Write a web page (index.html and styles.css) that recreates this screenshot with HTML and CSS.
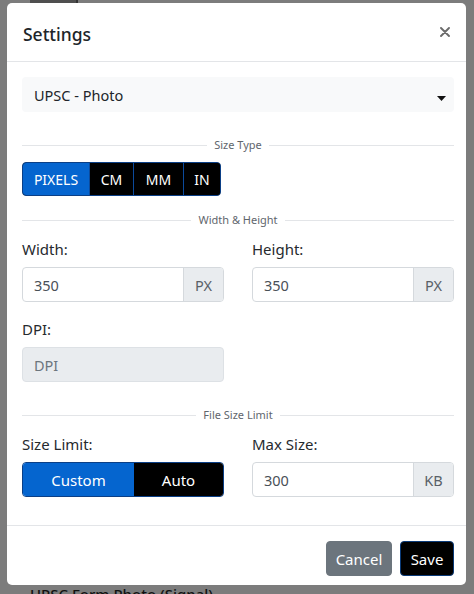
FILE: index.html
```html
<!DOCTYPE html>
<html>
<head>
<meta charset="utf-8">
<link rel="stylesheet" href="styles.css">
</head>
<body>
<div class="page">
  <div class="bg-top"><span class="bg-block"></span><span class="bg-rest"></span></div>
  <div class="bg-text">UPSC Form Photo (Signal)</div>

  <div class="modal">
    <div class="modal-header">
      <h5 class="modal-title">Settings</h5>
      <button class="close" aria-label="Close">
        <svg width="10" height="10" viewBox="0 0 10 10"><path d="M1 1L9 9M9 1L1 9" stroke="#6b6b6b" stroke-width="1.9" stroke-linecap="round"/></svg>
      </button>
    </div>
    <div class="modal-body">
      <div class="select-box">
        <span>UPSC - Photo</span>
        <svg class="caret" width="9" height="5" viewBox="0 0 9 5"><path d="M0 0H9L4.5 5Z" fill="#111"/></svg>
      </div>

      <div class="divider d-size"><span>Size Type</span></div>
      <div class="seg-group">
        <span class="seg active seg-px">PIXELS</span>
        <span class="seg seg-cm">CM</span>
        <span class="seg seg-mm">MM</span>
        <span class="seg seg-in">IN</span>
      </div>

      <div class="divider d-wh"><span>Width &amp; Height</span></div>
      <div class="form-grid">
        <div class="field">
          <label class="lbl">Width:</label>
          <div class="input-group"><span class="val">350</span><span class="addon">PX</span></div>
        </div>
        <div class="field">
          <label class="lbl">Height:</label>
          <div class="input-group"><span class="val">350</span><span class="addon">PX</span></div>
        </div>
        <div class="field f-dpi">
          <label class="lbl">DPI:</label>
          <div class="input-disabled"><span class="ph">DPI</span></div>
        </div>
      </div>

      <div class="divider d-file"><span>File Size Limit</span></div>
      <div class="form-grid">
        <div class="field">
          <label class="lbl">Size Limit:</label>
          <div class="toggle"><span class="tg tg-custom">Custom</span><span class="tg tg-auto">Auto</span></div>
        </div>
        <div class="field">
          <label class="lbl">Max Size:</label>
          <div class="input-group"><span class="val">300</span><span class="addon">KB</span></div>
        </div>
      </div>
    </div>
    <div class="modal-footer">
      <button class="btn btn-cancel">Cancel</button>
      <button class="btn btn-save">Save</button>
    </div>
  </div>
</div>
</body>
</html>
```

FILE: styles.css
```css
* { box-sizing: border-box; }
html, body { margin: 0; padding: 0; }
body {
  font-family: "Noto Sans", "Open Sans", sans-serif;
  background: #7c7c7c;
  color: #212529;
}
.page {
  position: relative;
  width: 474px;
  height: 594px;
  display: flex;
  flex-direction: column;
  justify-content: space-between;
  overflow: hidden;
}
.bg-top { display: flex; height: 4px; }
.bg-block { width: 48px; margin-left: 30px; background: #4f4f4f; border-right: 2px solid #333; }
.bg-text {
  padding-left: 30px;
  font-size: 15px;
  line-height: 16px;
  height: 8px;
  color: #111;
  font-weight: 500;
}

.modal {
  position: absolute;
  top: 3px;
  left: 7px;
  width: 459px;
  height: 582px;
  background: #fff;
  border-radius: 5px;
  display: flex;
  flex-direction: column;
}
.modal-header {
  height: 59px;
  border-bottom: 1px solid #e3e5e8;
  display: flex;
  align-items: center;
  justify-content: space-between;
  padding: 0 15px 0 16px;
}
.modal-title {
  margin: 0;
  font-size: 17.5px;
  font-weight: 500;
  line-height: 24px;
  padding-top: 3px;
  color: #212529;
}
.close {
  border: 0;
  background: none;
  padding: 0;
  width: 12px;
  height: 12px;
  display: flex;
  align-items: center;
  justify-content: center;
}
.modal-body {
  flex: 1;
  padding: 15px 12px 0 15px;
}
.select-box {
  height: 35px;
  background: #f8f9fa;
  border-radius: 4px;
  display: flex;
  align-items: center;
  justify-content: space-between;
  padding: 0 8px 0 12px;
  font-size: 14.5px;
  color: #212529;
}
.caret { margin-top: 7px; }

.divider {
  height: 16px;
  display: flex;
  align-items: center;
  justify-content: center;
  position: relative;
}
.divider::before {
  content: "";
  position: absolute;
  left: 0; right: 0; top: 8px;
  border-top: 1px solid #e3e5e8;
}
.divider span {
  position: relative;
  background: #fff;
  padding: 0 7px;
  font-size: 11px;
  color: #5f666d;
  line-height: 16px;
}
.d-size { margin-top: 25px; }
.d-wh { margin-top: 16px; }
.d-file { margin-top: 25px; }

.seg-group {
  margin-top: 9px;
  display: inline-flex;
  height: 34px;
  border-radius: 4px;
  overflow: hidden;
  background: #000;
  border: 1px solid #0b3f86;
}
.seg {
  display: flex;
  align-items: center;
  justify-content: center;
  color: #fff;
  font-size: 14px;
  background: #000;
  border-left: 1px solid #0b4a9c;
}
.seg.active { background: #0565cf; border-left: 0; }
.seg-px { width: 66px; }
.seg-cm { width: 44px; }
.seg-mm { width: 50px; }
.seg-in { width: 37px; }

.form-grid {
  display: grid;
  grid-template-columns: 202px 202px;
  column-gap: 28px;
}
.field { display: flex; flex-direction: column; }
.lbl {
  margin-top: 9px;
  line-height: 24px;
  font-size: 15px;
  color: #262a2e;
}
.f-dpi .lbl { margin-top: 15px; }
.input-group {
  margin-top: 6px;
  height: 35px;
  display: flex;
  border: 1px solid #d5d9dd;
  border-radius: 4px;
  overflow: hidden;
}
.val {
  flex: 1;
  display: flex;
  align-items: center;
  padding-left: 11px;
  font-size: 14.5px;
  color: #495057;
}
.addon {
  width: 40px;
  background: #e9ecef;
  border-left: 1px solid #d5d9dd;
  display: flex;
  align-items: center;
  justify-content: center;
  font-size: 14.5px;
  color: #5a6067;
}
.input-disabled {
  margin-top: 6px;
  height: 35px;
  background: #e9ecef;
  border: 1px solid #dde1e5;
  border-radius: 4px;
  display: flex;
  align-items: center;
  padding-left: 11px;
}
.ph { font-size: 14.5px; color: #6c757d; }

.toggle {
  margin-top: 6px;
  height: 35px;
  display: flex;
  border-radius: 4px;
  overflow: hidden;
  border: 1px solid #0b3f86;
}
.tg {
  display: flex;
  align-items: center;
  justify-content: center;
  color: #fff;
  font-size: 15px;
}
.tg-custom { width: 111px; background: #0565cf; }
.tg-auto { flex: 1; background: #000; }

.modal-footer {
  border-top: 1px solid #e3e5e8;
  padding: 15px 12px 0 0;
  height: 60px;
  display: flex;
  justify-content: flex-end;
  gap: 8px;
}
.btn {
  height: 35px;
  border-radius: 4px;
  font-family: inherit;
  font-size: 15px;
  color: #fff;
  padding: 0;
}
.btn-cancel { width: 66px; background: #6c757d; border: 1px solid #6c757d; }
.btn-save { width: 54px; background: #000; border: 1px solid #0a3a78; }
```
